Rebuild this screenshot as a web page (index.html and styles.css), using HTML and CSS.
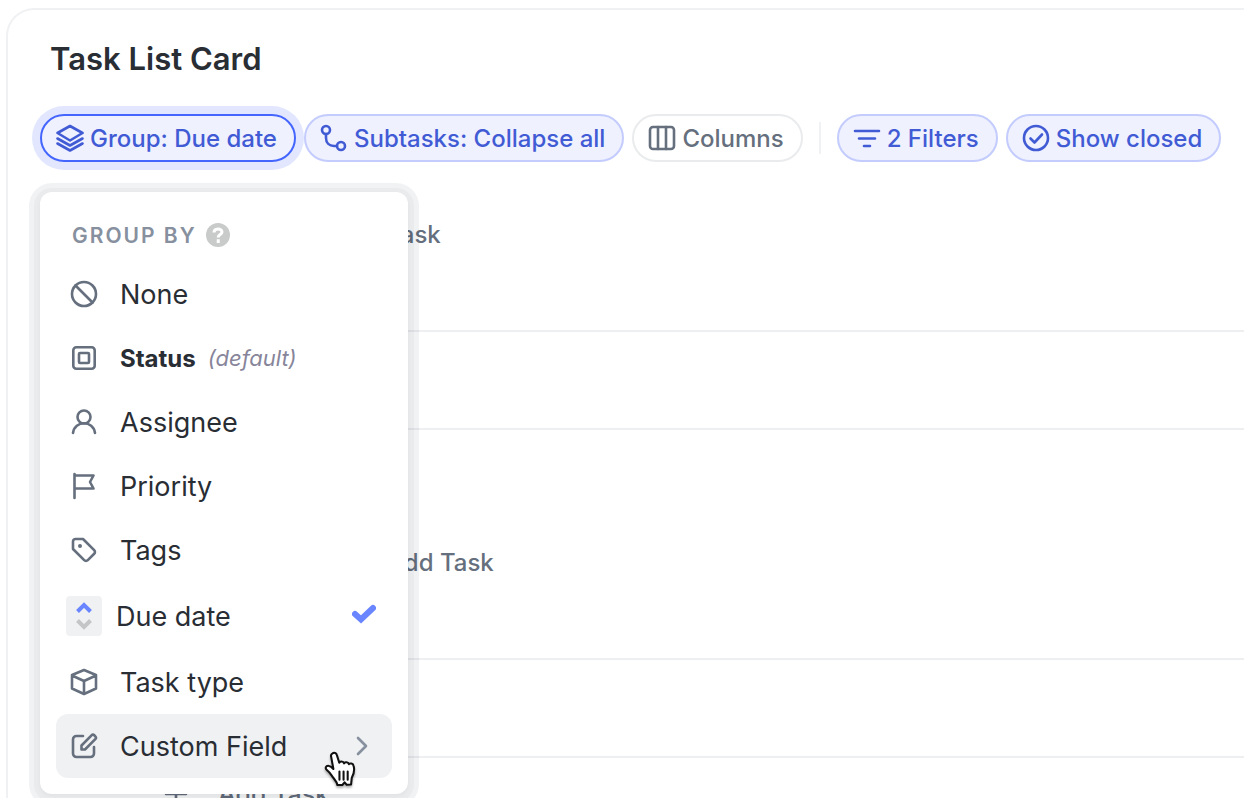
FILE: index.html
```html
<!DOCTYPE html>
<html lang="en">
<head>
    <meta charset="UTF-8">
    <meta name="viewport" content="width=device-width, initial-scale=1.0">
    <title>Task List Card</title>
    <link rel="stylesheet" href="styles.css">
</head>
<body>
    <div class="card">
        <h1 class="title">Task List Card</h1>

        <div class="toolbar">
            <div class="group">
                <button class="chip active open" type="button">
                    <svg class="icon" viewBox="0 0 28 28"><path d="M14 2 26.500 9 14 16.500 1.500 9ZM1.500 14.500 14 21.500l12.500-7M1.500 19.500 14 26.500l12.500-7"/></svg>
                    Group: Due date
                </button>

                <div class="menu">
                    <div class="menu-title">
                        GROUP BY
                        <svg class="help" viewBox="0 0 24 24"><circle cx="12" cy="12" r="12"/><path d="M8 9.500C8 4.800 16 4.800 16 9c0 2.600-3.800 2.600-3.800 5.400M12.200 16.200v3.800"/></svg>
                    </div>
                    <button class="item" type="button">
                        <svg class="icon" viewBox="0 0 28 28"><circle cx="14" cy="14" r="12"/><path d="M5.500 5.500l17 17"/></svg>
                        None
                    </button>
                    <button class="item" type="button">
                        <svg class="icon" viewBox="0 0 28 28"><rect x="3.300" y="3.300" width="21.400" height="21.400" rx="3"/><rect x="9" y="9" width="10" height="10" rx="1"/></svg>
                        <b>Status</b> <i>(default)</i>
                    </button>
                    <button class="item" type="button">
                        <svg class="icon" viewBox="0 0 28 28"><circle cx="14" cy="9" r="6.500"/><path d="M3 25C4.500 12 23.500 12 25 25"/></svg>
                        Assignee
                    </button>
                    <button class="item" type="button">
                        <svg class="icon" viewBox="0 0 28 28"><path d="M4.500 2v24M4.500 3.500h19L20 10l3.500 6.500h-19"/></svg>
                        Priority
                    </button>
                    <button class="item" type="button">
                        <svg class="icon" viewBox="0 0 28 28"><path d="M3 5.500A2.500 2.500 0 0 1 5.500 3H13l11.200 11.200a2.500 2.500 0 0 1 0 3.600l-6.400 6.400a2.500 2.500 0 0 1-3.600 0L3 13Z"/><circle class="dot" cx="10" cy="10" r="2"/></svg>
                        Tags
                    </button>
                    <button class="item sorted" type="button">
                        <span class="sort">
                            <svg viewBox="0 0 36 40"><path class="up" d="M11.500 15.500 18 9l6.500 6.500"/><path class="down" d="M11.500 24.500 18 31l6.500-6.500"/></svg>
                        </span>
                        Due date
                        <svg class="check" viewBox="0 0 24 24"><path d="M3 10l6 5.500L21 4"/></svg>
                    </button>
                    <button class="item" type="button">
                        <svg class="icon" viewBox="0 0 28 28"><path d="M14 2 26 7v13.500L14 26 2 20.500V7ZM2 7.500 14 13l12-5.500M14 13v13"/></svg>
                        Task type
                    </button>
                    <button class="item hover" type="button">
                        <svg class="icon" viewBox="0 0 28 28"><path d="M13 4H6.500A3.500 3.500 0 0 0 3 7.500v14A3.500 3.500 0 0 0 6.500 25h14a3.500 3.500 0 0 0 3.500-3.500V15M11.500 17.500v-4L21.500 3.300a2 2 0 0 1 2.800 0l1 1a2 2 0 0 1 0 2.800L15 17.500Z"/></svg>
                        Custom Field
                        <svg class="arrow" viewBox="0 0 12 20"><path d="M2 2l8 8-8 8"/></svg>
                    </button>
                    <svg class="pointer" viewBox="0 0 34 36"><path d="M8.500 2.500C10.500 1 12.500 2 13 4l2.300 7.500c.2-1.700 4-1.700 4.700.5.500-1.600 4-1.400 4.700.8 1-1.300 4-.8 4.600 1.700 1.200 4.500.2 8-1.800 11.500l-.7 6.500-4.300.3-2-2.300-2.200 2.600h-4.800c-.5-3.500-3.500-6-5.500-9.100-1.500-2.300-3-4-5-5.700-1.600-1.400-.8-4 1.600-3.900 2 .1 3.600 1.600 5 3.100L7.500 6C7 4.500 7.300 3.200 8.500 2.500Z"/><path d="M15.500 20v8M19.500 20v8M23.500 20v8"/></svg>
                </div>
            </div>
            <button class="chip active" type="button">
                <svg class="icon" viewBox="0 0 28 28"><circle cx="6" cy="6" r="4"/><circle cx="21" cy="22" r="4"/><path d="M6 10v4c0 5 3.500 8 8 8h3"/></svg>
                Subtasks: Collapse all
            </button>
            <button class="chip" type="button">
                <svg class="icon" viewBox="0 0 28 28"><rect x="2" y="3" width="24" height="22" rx="3"/><path d="M10 3v22M18 3v22"/></svg>
                Columns
            </button>
            <span class="divider"></span>
            <button class="chip active" type="button">
                <svg class="icon" viewBox="0 0 28 28"><path d="M2 7h24M6 14.500h16M11 22h6"/></svg>
                2 Filters
            </button>
            <button class="chip active" type="button">
                <svg class="icon" viewBox="0 0 28 28"><circle cx="14" cy="14" r="12"/><path d="M8.500 14.500l4 4 7.500-8"/></svg>
                Show closed
            </button>
        </div>

        <div class="list">
            <div class="section first"><a href="#" class="add level-2">Add Task</a></div>
            <div class="section"></div>
            <div class="section tall"><a href="#" class="add level-3">Add Task</a></div>
            <div class="section"></div>
            <div class="section last"><a href="#" class="add level-1"><svg viewBox="0 0 24 24"><path d="M12 2v20M2 12h20"/></svg>Add Task</a></div>
        </div>
    </div>
</body>
</html>
```

FILE: styles.css
```css
* {
    box-sizing: border-box;
}
body {
    margin: 0;
    height: 100vh;
    overflow: hidden;
    background-color: #fff;
    color: #292d34;
    font-family: Inter, "Liberation Sans", sans-serif;
}
button {
    font: inherit;
    cursor: pointer;
}
svg {
    flex: none;
    fill: none;
    stroke: currentColor;
    stroke-width: 2.6;
    stroke-linecap: round;
    stroke-linejoin: round;
}
.card {
    margin: 8px 0 0 6px;
    padding-top: 30px;
    border: 2px solid #f0f1f3;
    border-right: 0;
    border-radius: 28px 0 0 0;
    min-height: 100vh;
}
.title {
    margin: 0;
    padding-left: 42px;
    font-size: 31px;
    line-height: 38px;
    font-weight: 600;
}
.toolbar {
    display: flex;
    align-items: center;
    gap: 8px;
    padding: 36px 0 0 32px;
}
.group {
    position: relative;
}
.chip {
    display: flex;
    align-items: center;
    gap: 6px;
    height: 48px;
    padding: 0 17px 0 14px;
    border: 2px solid #e9ebed;
    border-radius: 24px;
    background-color: #fff;
    color: #656f7d;
    font-size: 24px;
    font-weight: 500;
    white-space: nowrap;
}
.chip.active {
    border-color: #c3ccfd;
    background-color: #eff1ff;
    color: #415bd5;
}
.chip.open {
    border-color: #4466ff;
    box-shadow: 0 0 0 8px #e2e7ff;
}
.icon {
    width: 28px;
    height: 28px;
}
.divider {
    width: 2px;
    height: 32px;
    margin: 0 8px;
    background-color: #f0f1f3;
}

/* group by dropdown */
.menu {
    position: absolute;
    top: 78px;
    left: 0;
    z-index: 2;
    width: 368px;
    padding: 16px;
    border-radius: 12px;
    background-color: #fff;
    box-shadow: 0 2px 4px rgba(20, 30, 40, 0.04), 0 2px 0 6px rgba(20, 30, 30, 0.03), 0 2px 0 11px rgba(20, 30, 50, 0.06);
}
.menu-title {
    display: flex;
    align-items: center;
    gap: 9px;
    height: 54px;
    padding-left: 16px;
    color: #87909e;
    font-size: 21px;
    font-weight: 600;
    letter-spacing: 2px;
}
.help {
    width: 24px;
    height: 24px;
}
.help circle {
    fill: #c8cbca;
    stroke: none;
}
.help path {
    stroke: #fff;
    stroke-width: 3;
    stroke-linecap: butt;
}
.item {
    display: flex;
    align-items: center;
    width: 100%;
    height: 64px;
    padding: 0 24px 0 14px;
    border: 0;
    border-radius: 12px;
    background-color: transparent;
    color: #292d34;
    font-size: 27px;
    text-align: left;
}
.item .icon {
    margin-right: 22px;
    color: #656f7d;
}
.item b {
    font-size: 24px;
    font-weight: 700;
}
.item i {
    margin-left: 12px;
    color: #87859a;
    font-size: 22px;
}
.item .dot {
    fill: #656f7d;
    stroke: none;
}
.item.hover {
    background-color: #f0f1f3;
}
.item.sorted {
    height: 68px;
    padding: 0 16px 0 10px;
}
.sort {
    width: 36px;
    height: 40px;
    margin-right: 14px;
    border-radius: 4px;
    background-color: #f0f1f3;
}
.sort svg {
    display: block;
    width: 36px;
    height: 40px;
    stroke-width: 4;
    stroke-linecap: butt;
    stroke-linejoin: miter;
}
.up {
    stroke: #6985ff;
}
.down {
    stroke: #c3c5c7;
}
.check {
    width: 24px;
    height: 24px;
    margin-left: auto;
    stroke: #6985ff;
    stroke-width: 6;
    stroke-linejoin: miter;
}
.arrow {
    width: 12px;
    height: 20px;
    margin-left: auto;
    color: #87909e;
}
.pointer {
    position: absolute;
    right: 49px;
    bottom: 6px;
    width: 36px;
    height: 37px;
    fill: #fff;
    stroke: #111;
    stroke-width: 2;
    filter: drop-shadow(0 2px 1px rgba(0, 0, 0, 0.3));
}

/* task sections */
.list {
    padding: 40px 0 0 32px;
}
.section {
    height: 98px;
    border-bottom: 2px solid #eeeff1;
}
.section.first {
    height: 130px;
}
.section.tall {
    height: 230px;
    padding-top: 100px;
}
.section.last {
    padding-top: 4px;
    border: 0;
}
.add {
    display: flex;
    align-items: center;
    gap: 30px;
    height: 64px;
    color: #656f7d;
    font-size: 24px;
    font-weight: 500;
    text-decoration: none;
}
.add svg {
    width: 24px;
    height: 24px;
}
.level-1 {
    padding-left: 124px;
    font-size: 25px;
}
.level-2 {
    padding-left: 294px;
}
.level-3 {
    padding-left: 347px;
}
```
